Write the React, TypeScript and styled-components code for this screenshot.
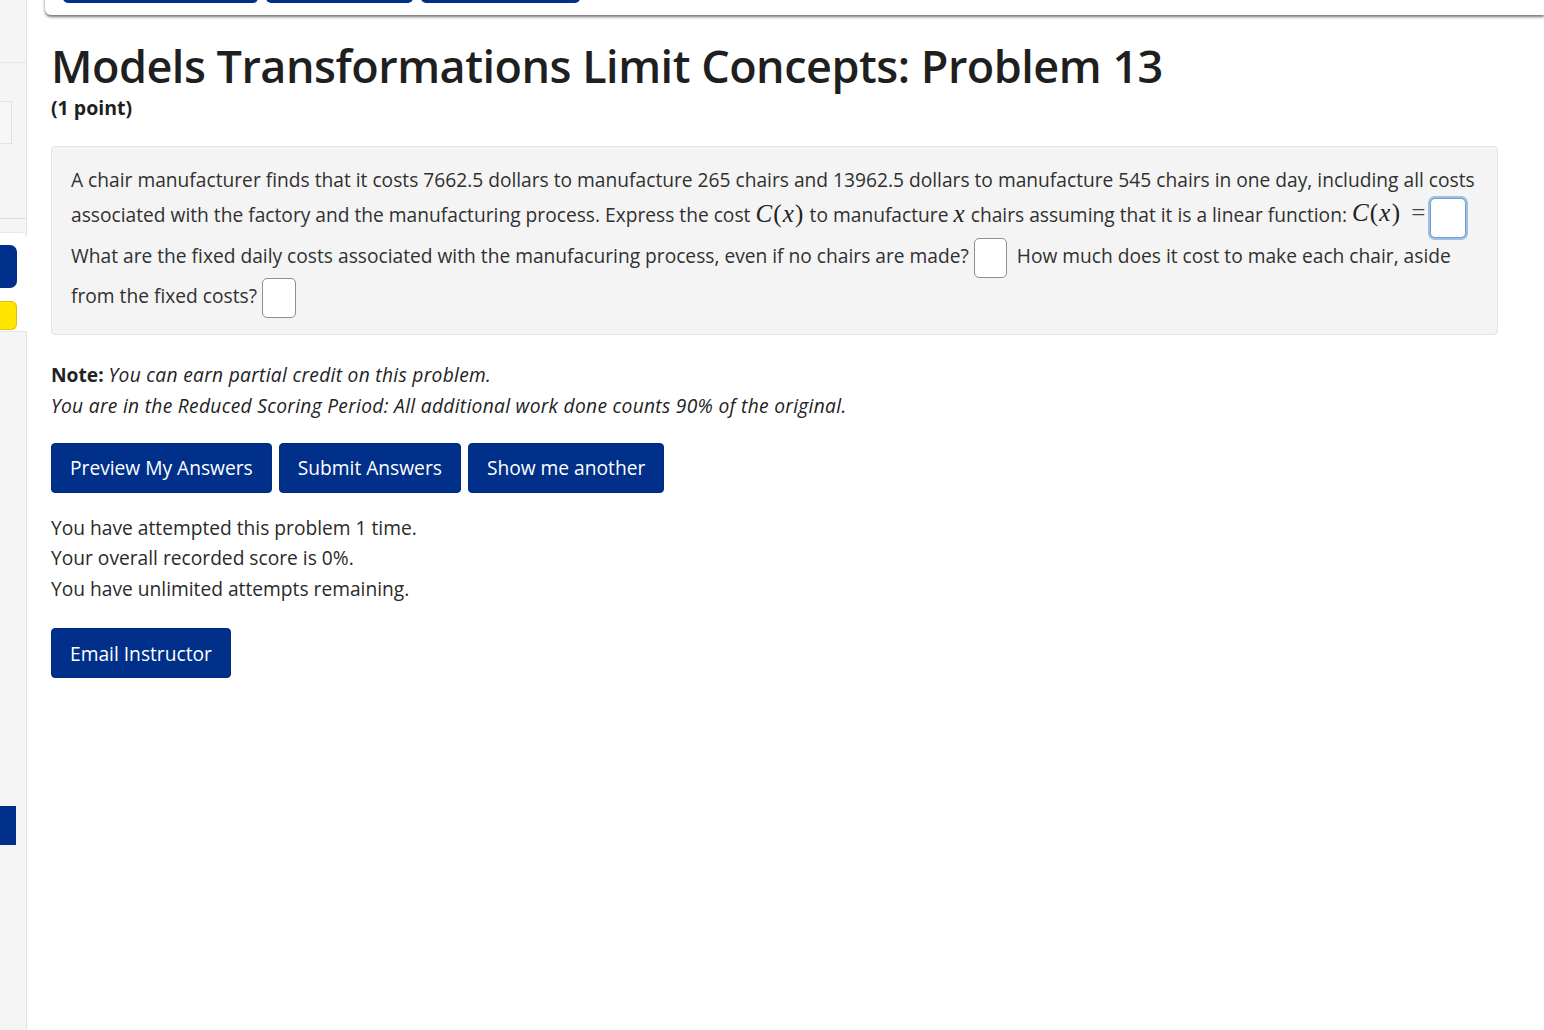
import React from "react";
import styled, { createGlobalStyle } from "styled-components";

const GlobalStyle = createGlobalStyle`
  html, body {
    margin: 0;
    padding: 0;
    background: #ffffff;
    overflow: hidden;
  }
  body {
    font-family: "Open Sans", "Noto Sans", sans-serif;
    color: #212529;
  }
`;

export default function App() {
  return (
    <>
      <GlobalStyle />
      <Page>
        <Sidebar>
          <SideTop />
          <SideMiddle>
            <SideInner />
          </SideMiddle>
          <SideCard>
            <SideButton />
            <SideBadge />
          </SideCard>
          <SideBottomButton />
        </Sidebar>
        <Main>
          <Navbar>
            <NavButton $w={195} />
            <NavButton $w={147} />
            <NavButton $w={159} />
          </Navbar>
          <Content>
            <Title>Models Transformations Limit Concepts: Problem 13</Title>
            <Points>(1 point)</Points>
            <ProblemBox>
              <ProblemText>
                A chair manufacturer finds that it costs 7662.5 dollars to
                manufacture 265 chairs and 13962.5 dollars to manufacture 545
                chairs in one day, including all costs associated with the
                factory and the manufacturing process. Express the cost{" "}
                <MathText>
                  <MathVar>C</MathVar>(<MathVar>x</MathVar>)
                </MathText>{" "}
                to manufacture <MathText><MathVar>x</MathVar></MathText> chairs
                assuming that it is a linear function:{" "}
                <MathText>
                  <MathVar>C</MathVar>(<MathVar>x</MathVar>)
                  <MathOp>=</MathOp>
                </MathText>
                <AnswerInput $focused $w={36} />
                <br />
                What are the fixed daily costs associated with the manufacuring
                process, even if no chairs are made?
                <AnswerInput $w={33} /> How much does it cost to make each
                chair, aside from the fixed costs?
                <AnswerInput $w={34} />
              </ProblemText>
            </ProblemBox>
            <Notes>
              <NoteLine>
                <b>Note:</b> <i>You can earn partial credit on this problem.</i>
              </NoteLine>
              <NoteLine>
                <i>
                  You are in the Reduced Scoring Period: All additional work
                  done counts 90% of the original.
                </i>
              </NoteLine>
            </Notes>
            <ButtonRow>
              <PrimaryButton>Preview My Answers</PrimaryButton>
              <PrimaryButton>Submit Answers</PrimaryButton>
              <PrimaryButton>Show me another</PrimaryButton>
            </ButtonRow>
            <Status>
              <StatusLine>You have attempted this problem 1 time.</StatusLine>
              <StatusLine>Your overall recorded score is 0%.</StatusLine>
              <StatusLine>You have unlimited attempts remaining.</StatusLine>
            </Status>
            <PrimaryButton>Email Instructor</PrimaryButton>
          </Content>
        </Main>
      </Page>
    </>
  );
}

const Page = styled.div`
  display: flex;
  min-height: 100vh;
`;

const Sidebar = styled.aside`
  width: 26px;
  flex-shrink: 0;
  background: #f5f5f5;
  border-right: 1px solid #e3e3e3;
  display: flex;
  flex-direction: column;
`;

const SideTop = styled.div`
  height: 62px;
  border-bottom: 1px solid #e6e6e6;
`;

const SideMiddle = styled.div`
  height: 156px;
  border-bottom: 1px solid #dedede;
  padding-top: 38px;
  box-sizing: border-box;
`;

const SideInner = styled.div`
  width: 11px;
  height: 41px;
  border: 1px solid #e2e2e2;
  border-left: none;
  background: #f7f7f7;
`;

const SideCard = styled.div`
  margin-top: 13px;
  background: #ffffff;
  border: 1px solid #e6e6e6;
  border-left: none;
  border-right: none;
  border-top-right-radius: 6px;
  padding: 12px 10px 0 0;
  display: flex;
  flex-direction: column;
  gap: 13px;
  height: 100px;
  box-sizing: border-box;
  margin-right: -1px;
`;

const SideButton = styled.div`
  height: 43px;
  background: #00308a;
  border-radius: 0 7px 7px 0;
`;

const SideBadge = styled.div`
  height: 27px;
  background: #ffe600;
  border: 1px solid #e0c000;
  border-left: none;
  border-radius: 0 6px 6px 0;
`;

const SideBottomButton = styled.div`
  margin-top: 474px;
  height: 39px;
  width: 16px;
  background: #00308a;
`;

const Main = styled.main`
  flex: 1;
  min-width: 0;
`;

const Navbar = styled.header`
  margin-left: 18px;
  margin-top: -40px;
  height: 55px;
  box-sizing: border-box;
  background: #ffffff;
  border-bottom-left-radius: 6px;
  box-shadow: 0 2px 3px rgba(0, 0, 0, 0.55);
  display: flex;
  align-items: flex-end;
  gap: 8px;
  padding: 0 0 12px 18px;
`;

const NavButton = styled.div<{ $w: number }>`
  width: ${({ $w }) => $w}px;
  height: 30px;
  background: #00308a;
  border-radius: 5px;
`;

const Content = styled.div`
  padding: 0 46px 0 24px;
`;

const Title = styled.h1`
  margin: 23px 0 0;
  font-family: "Open Sans", "Noto Sans", sans-serif;
  font-size: 45px;
  font-weight: 600;
  line-height: 56px;
  letter-spacing: -0.5px;
  color: #1f1f1f;
`;

const Points = styled.div`
  font-size: 19.5px;
  font-weight: 700;
  line-height: 24px;
  margin-top: 2px;
  color: #1f1f1f;
`;

const ProblemBox = styled.section`
  margin-top: 26px;
  background: #f4f4f4;
  border: 1px solid #e4e4e4;
  border-radius: 4px;
  padding: 19px 12px 16px 19px;
`;

const ProblemText = styled.div`
  font-size: 19.2px;
  line-height: 28.8px;
  color: #303030;
`;

const MathText = styled.span`
  font-family: "Liberation Serif", "DejaVu Serif", serif;
  font-size: 25px;
  color: #222;
  letter-spacing: 1.2px;
`;

const MathVar = styled.span`
  font-style: italic;
`;

const MathOp = styled.span`
  margin-left: 10px;
  color: #444;
`;

const AnswerInput = styled.span<{ $focused?: boolean; $w: number }>`
  display: inline-block;
  vertical-align: middle;
  width: ${({ $w }) => $w}px;
  height: 40px;
  box-sizing: border-box;
  margin: ${({ $focused }) => ($focused ? "3px 5px 0 3px" : "0 5px")};
  background: #ffffff;
  border-radius: 5px;
  border: 1px solid ${({ $focused }) => ($focused ? "#6a9fd0" : "#8e8e8e")};
  box-shadow: ${({ $focused }) =>
    $focused ? "0 0 0 2px rgba(88, 148, 205, 0.55)" : "none"};
`;

const Notes = styled.div`
  margin-top: 24px;
  font-size: 19.2px;
  line-height: 31px;
  color: #222;

  i {
    letter-spacing: 0.3px;
  }
`;

const NoteLine = styled.div``;

const ButtonRow = styled.div`
  display: flex;
  gap: 7px;
  margin-top: 22px;
`;

const PrimaryButton = styled.button`
  font-family: "Open Sans", "Noto Sans", sans-serif;
  font-size: 19.2px;
  color: #ffffff;
  background: #00308a;
  border: 1px solid #002a7a;
  border-radius: 4px;
  height: 50px;
  padding: 0 18px;
  cursor: pointer;
`;

const Status = styled.div`
  margin: 20px 0 24px;
  font-size: 19.2px;
  line-height: 30.5px;
  color: #2a2a2a;
`;

const StatusLine = styled.div``;
